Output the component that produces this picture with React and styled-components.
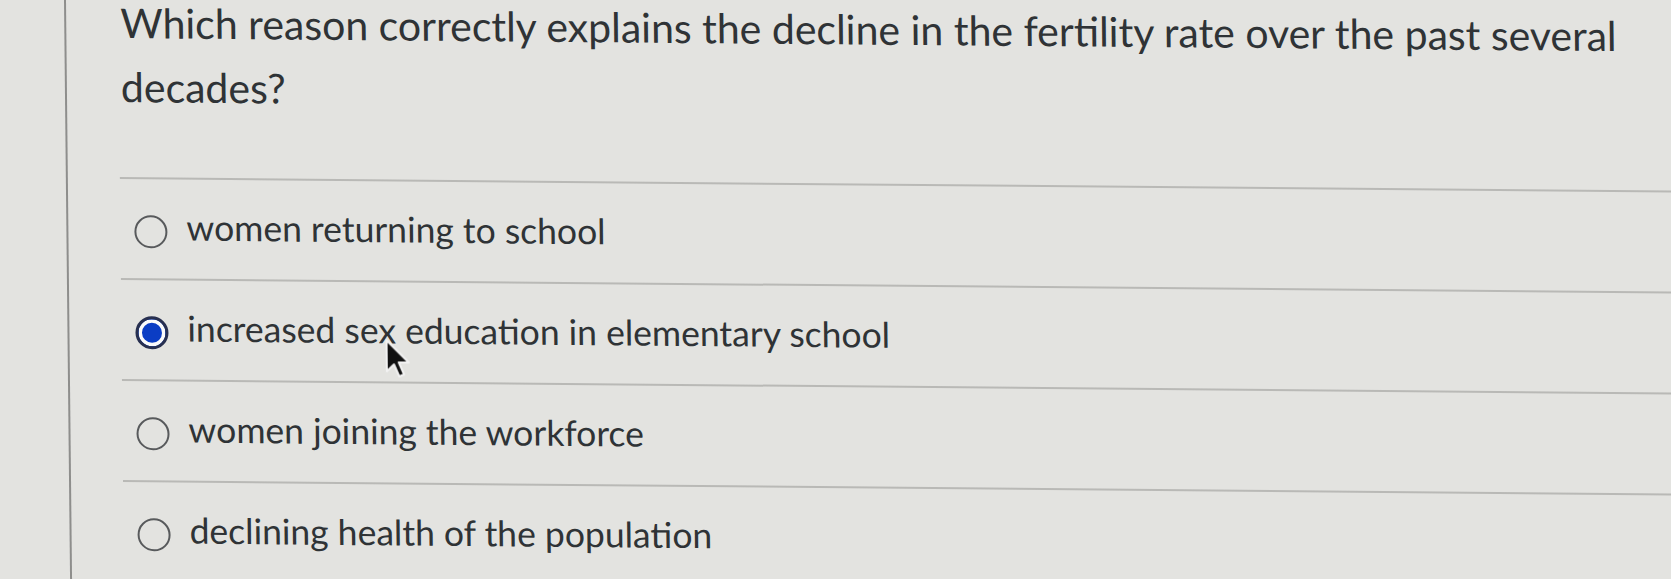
import styled, { createGlobalStyle } from "styled-components";

const GlobalStyle = createGlobalStyle`
  html, body {
    margin: 0;
    padding: 0;
    background: #e3e3e0;
    overflow: hidden;
  }
  * {
    box-sizing: border-box;
  }
`;

const options = [
  { id: "a", label: "women returning to school", checked: false },
  { id: "b", label: "increased sex education in elementary school", checked: true },
  { id: "c", label: "women joining the workforce", checked: false },
  { id: "d", label: "declining health of the population", checked: false },
];

function App() {
  return (
    <>
      <GlobalStyle />
      <Page>
        <Gutter />
        <Main>
          <Question>
            Which reason correctly explains the decline in the fertility rate over the past several
            decades?
          </Question>
          <OptionList>
            {options.map((opt) => (
              <OptionRow key={opt.id}>
                <Radio $checked={opt.checked} />
                <Label>{opt.label}</Label>
              </OptionRow>
            ))}
          </OptionList>
        </Main>
        <Cursor viewBox="0 0 13 20" aria-hidden="true">
          <path
            d="M1 1 L1 16.5 L4.6 13 L7.2 19 L9.6 18 L7 12 L12 12 Z"
            fill="#111"
            stroke="#f2f2f2"
            strokeWidth="1"
            strokeLinejoin="round"
          />
        </Cursor>
      </Page>
    </>
  );
}

const Page = styled.div`
  position: relative;
  display: flex;
  width: 1690px;
  height: 579px;
  transform: skew(0.6deg, 0.5deg);
  transform-origin: 0 0;
  font-family: Lato, "Open Sans", sans-serif;
  color: #2f3336;
`;

const Gutter = styled.div`
  width: 66px;
  flex-shrink: 0;
  border-right: 2px solid #8e8e8c;
  margin-top: -20px;
`;

const Main = styled.div`
  flex: 1;
  padding-left: 52px;
`;

const Question = styled.p`
  max-width: 1540px;
  margin: -10px 0 58px;
  padding-left: 2px;
  font-size: 41px;
  line-height: 64px;
  font-weight: 400;
`;

const OptionList = styled.div`
  display: flex;
  flex-direction: column;
`;

const OptionRow = styled.div`
  display: flex;
  align-items: center;
  height: 101px;
  padding-top: 5px;
  padding-left: 14px;
  border-top: 2px solid #b9b9b6;
`;

const Radio = styled.span`
  width: 33px;
  height: 33px;
  flex-shrink: 0;
  border-radius: 50%;
  border: ${(p) => (p.$checked ? "3px solid #283050" : "2.5px solid #585a5c")};
  background: ${(p) => (p.$checked ? "#0b3dc4" : "transparent")};
  box-shadow: ${(p) => (p.$checked ? "inset 0 0 0 3.5px #fbfbfb" : "none")};
`;

const Label = styled.span`
  margin-left: 19px;
  margin-bottom: 8px;
  font-size: 35.5px;
  line-height: 1.2;
  white-space: nowrap;
`;

const Cursor = styled.svg`
  position: absolute;
  left: 381px;
  top: 335px;
  width: 26px;
  height: 40px;
  filter: blur(0.4px);
`;

export default App;
